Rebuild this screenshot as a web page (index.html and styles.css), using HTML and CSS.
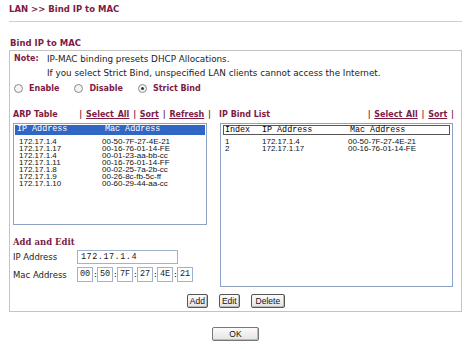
FILE: index.html
```html
<!DOCTYPE html>
<html>
<head>
<meta charset="utf-8">
<link rel="stylesheet" href="styles.css">
</head>
<body>
<div class="page">
  <div class="title">LAN &gt;&gt; Bind IP to MAC</div>
  <div class="subtitle">Bind IP to MAC</div>
  <div class="box">
    <div class="note">
      <span class="note-label">Note:</span>
      <span class="note-text">IP-MAC binding presets DHCP Allocations.<br>If you select Strict Bind, unspecified LAN clients cannot access the Internet.</span>
    </div>
    <div class="radios">
      <span class="radio"></span><span class="rlabel">Enable</span>
      <span class="radio"></span><span class="rlabel">Disable</span>
      <span class="radio checked"></span><span class="rlabel">Strict Bind</span>
    </div>
    <div class="cols">
      <div class="col-left">
        <div class="head">
          <span class="head-title">ARP Table</span>
          <span class="links">| <a>Select All</a> | <a>Sort</a> | <a>Refresh</a> |</span>
        </div>
        <div class="list list-arp">
          <div class="list-head sel"><span class="c-ip">IP Address</span><span>Mac Address</span></div>
          <div class="rows">
            <div class="row"><span class="c-ip2">172.17.1.4</span><span>00-50-7F-27-4E-21</span></div>
            <div class="row"><span class="c-ip2">172.17.1.17</span><span>00-16-76-01-14-FE</span></div>
            <div class="row"><span class="c-ip2">172.17.1.4</span><span>00-01-23-aa-bb-cc</span></div>
            <div class="row"><span class="c-ip2">172.17.1.11</span><span>00-16-76-01-14-FF</span></div>
            <div class="row"><span class="c-ip2">172.17.1.8</span><span>00-02-25-7a-2b-cc</span></div>
            <div class="row"><span class="c-ip2">172.17.1.9</span><span>00-26-8c-fb-5c-ff</span></div>
            <div class="row"><span class="c-ip2">172.17.1.10</span><span>00-60-29-44-aa-cc</span></div>
          </div>
        </div>
        <div class="edit-title">Add and Edit</div>
        <div class="field">
          <span class="flabel">IP Address</span>
          <span class="input ip">172.17.1.4</span>
        </div>
        <div class="field">
          <span class="flabel">Mac Address</span>
          <span class="macs">
            <span class="input mac">00</span><span class="colon">:</span>
            <span class="input mac">50</span><span class="colon">:</span>
            <span class="input mac">7F</span><span class="colon">:</span>
            <span class="input mac">27</span><span class="colon">:</span>
            <span class="input mac">4E</span><span class="colon">:</span>
            <span class="input mac">21</span>
          </span>
        </div>
      </div>
      <div class="col-right">
        <div class="head">
          <span class="head-title">IP Bind List</span>
          <span class="links">| <a>Select All</a> | <a>Sort</a> |</span>
        </div>
        <div class="list list-bind">
          <div class="list-head outlined"><span class="c-idx">Index</span><span class="c-ipb">IP Address</span><span>Mac Address</span></div>
          <div class="rows">
            <div class="row"><span class="c-idx2">1</span><span class="c-ipb2">172.17.1.4</span><span>00-50-7F-27-4E-21</span></div>
            <div class="row"><span class="c-idx2">2</span><span class="c-ipb2">172.17.1.17</span><span>00-16-76-01-14-FE</span></div>
          </div>
        </div>
      </div>
    </div>
    <div class="buttons">
      <span class="btn">Add</span>
      <span class="btn">Edit</span>
      <span class="btn wide">Delete</span>
    </div>
  </div>
  <div class="ok-row"><span class="btn ok">OK</span></div>
</div>
</body>
</html>
```

FILE: styles.css
```css
* { box-sizing: border-box; }
body {
  margin: 0;
  background: #fff;
  font-family: "DejaVu Sans", Verdana, sans-serif;
  font-size: 8px;
  color: #000;
}
.page {
  padding: 4px 0 0 9px;
  width: 462px;
}
.title {
  font-weight: bold;
  font-size: 8.5px;
  color: #7d1b45;
  line-height: 11px;
  padding-bottom: 6px;
  border-bottom: 1px solid #cfcfcf;
}
.subtitle {
  font-weight: bold;
  font-size: 8.5px;
  color: #7d1b45;
  line-height: 11px;
  margin-top: 16px;
  padding-left: 1px;
  padding-bottom: 1px;
}
.box {
  border: 1px solid #c4c4c4;
  width: 453px;
  padding: 1px 0 3px 3px;
}
.note {
  display: flex;
  line-height: 14px;
}
.note-label {
  font-weight: bold;
  color: #7d1b45;
  width: 34px;
  padding-left: 1px;
}
.note-text { color: #222; font-size: 8.8px; }
.radios {
  display: flex;
  align-items: center;
  height: 14px;
  margin-top: 1px;
  padding-left: 1px;
}
.radio {
  width: 9px;
  height: 9px;
  border-radius: 50%;
  border: 1px solid #8a8a8a;
  background: #f4f4f4;
  margin-right: 6px;
  position: relative;
}
.radio.checked::after {
  content: "";
  position: absolute;
  left: 2px;
  top: 2px;
  width: 3px;
  height: 3px;
  border-radius: 50%;
  background: #333;
}
.rlabel {
  font-weight: bold;
  color: #7d1b45;
  margin-right: 15px;
}
.cols {
  display: flex;
  margin-top: 13px;
}
.col-left {
  width: 198px;
}
.col-right {
  width: 235px;
  margin-left: 8px;
}
.head {
  display: flex;
  justify-content: space-between;
  line-height: 14px;
  height: 14px;
}
.head-title {
  font-weight: bold;
  color: #7d1b45;
}
.links {
  color: #7d1b45;
  font-weight: bold;
  word-spacing: 1px;
}
.links a {
  text-decoration: underline;
}
.list {
  border: 1px solid #8da2c4;
  background: #fff;
  margin-top: 1px;
  padding: 1px;
  font-family: "Liberation Sans", Arial, sans-serif;
  font-size: 8px;
}
.list-arp { width: 194px; height: 102px; }
.list-bind { width: 233px; height: 164px; margin-left: 1px; }
.list-head {
  font-family: "Liberation Mono", monospace;
  font-size: 8.4px;
  line-height: 9px;
  height: 10px;
  display: flex;
}
.list-head.sel {
  background: #3166c4;
  color: #fff;
  padding-left: 2px;
}
.list-head.outlined {
  border: 1px solid #555;
  padding-left: 1px;
  line-height: 8px;
  margin: 0 1px;
}
.c-ip { width: 88px; }
.c-idx { width: 37px; }
.c-ipb { width: 88px; }
.rows {
  padding-top: 3px;
  line-height: 7px;
  color: #111;
}
.row { display: flex; height: 7px; }
.c-ip2 { width: 87px; padding-left: 4px; }
.c-idx2 { width: 40px; padding-left: 3px; }
.c-ipb2 { width: 86px; }
.edit-title {
  margin-top: 12px;
  font-weight: bold;
  color: #7d1b45;
  line-height: 10px;
  font-family: "DejaVu Serif", serif;
  font-size: 8.5px;
}
.field {
  display: flex;
  align-items: center;
  height: 17px;
  margin-top: 1px;
}
.flabel {
  width: 64px;
  color: #222;
  font-size: 8.5px;
}
.input {
  border: 1px solid #9fb4cc;
  height: 14px;
  line-height: 12px;
  font-family: "Liberation Mono", monospace;
  font-size: 8.5px;
  padding-left: 3px;
  color: #222;
}
.input.ip { width: 101px; letter-spacing: 0.5px; }
.macs { display: flex; align-items: center; }
.input.mac { width: 16px; padding-left: 2px; height: 15px; }
.colon {
  width: 4px;
  text-align: center;
  font-size: 8px;
  font-family: "Liberation Mono", monospace;
}
.buttons {
  display: flex;
  justify-content: center;
  gap: 11px;
  margin-top: 7px;
  padding-right: 2px;
}
.btn {
  display: inline-block;
  border: 1px solid #555;
  border-radius: 2px;
  background: linear-gradient(#fbfbfb, #e4e4e4);
  box-shadow: inset -1px -1px 0 #bbb;
  font-family: "Liberation Sans", Arial, sans-serif;
  font-size: 8.5px;
  line-height: 12px;
  height: 14px;
  padding: 0 2px;
  color: #111;
}
.btn.wide { padding: 0 4px; }
.ok-row {
  display: flex;
  justify-content: center;
  width: 453px;
  margin-top: 15px;
}
.btn.ok {
  width: 47px;
  text-align: center;
  border-color: #777;
}
```
